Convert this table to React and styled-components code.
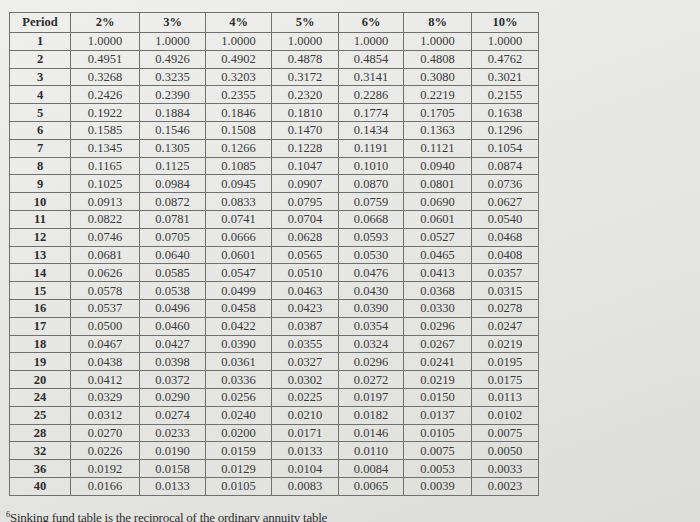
import React from "react";
import styled, { createGlobalStyle } from "styled-components";

const Global = createGlobalStyle`
  html, body { margin: 0; padding: 0; }
  body {
    width: 700px;
    height: 522px;
    overflow: hidden;
    background: linear-gradient(160deg, #efefed 0%, #e8e8e6 40%, #e2e2df 75%, #dcdcd8 100%);
    font-family: "Liberation Serif", "Times New Roman", serif;
    color: #363636;
  }
`;

const Page = styled.div`
  padding: 12px 0 0 9px;
`;

const Table = styled.table`
  border-collapse: collapse;
  table-layout: fixed;
  width: 521px;
  border: 1.5px solid #6a6a6a;
`;

const HeadCell = styled.th`
  height: 19px;
  padding: 0;
  font-weight: bold;
  font-size: 12.5px;
  text-align: center;
  color: #2e2e2e;
  border: 1.5px solid #707070;
  width: ${(p) => p.$w}px;
`;

const Cell = styled.td`
  height: 16.8px;
  padding: 0;
  font-size: 12.5px;
  text-align: center;
  font-weight: ${(p) => (p.$bold ? "bold" : "normal")};
  color: ${(p) => (p.$bold ? "#2e2e2e" : "#3a3a3a")};
  border: 1.5px solid #707070;
  line-height: 16px;
`;

const Note = styled.p`
  margin: 13px 0 0 -3px;
  font-size: 13px;
  letter-spacing: -0.25px;
  color: #303030;
`;

const Sup = styled.sup`
  font-size: 8.5px;
  vertical-align: 5px;
`;

const widths = [60, 68, 65, 65, 66, 64, 67, 66];
const heads = ["Period", "2%", "3%", "4%", "5%", "6%", "8%", "10%"];

const rows = [
  ["1", "1.0000", "1.0000", "1.0000", "1.0000", "1.0000", "1.0000", "1.0000"],
  ["2", "0.4951", "0.4926", "0.4902", "0.4878", "0.4854", "0.4808", "0.4762"],
  ["3", "0.3268", "0.3235", "0.3203", "0.3172", "0.3141", "0.3080", "0.3021"],
  ["4", "0.2426", "0.2390", "0.2355", "0.2320", "0.2286", "0.2219", "0.2155"],
  ["5", "0.1922", "0.1884", "0.1846", "0.1810", "0.1774", "0.1705", "0.1638"],
  ["6", "0.1585", "0.1546", "0.1508", "0.1470", "0.1434", "0.1363", "0.1296"],
  ["7", "0.1345", "0.1305", "0.1266", "0.1228", "0.1191", "0.1121", "0.1054"],
  ["8", "0.1165", "0.1125", "0.1085", "0.1047", "0.1010", "0.0940", "0.0874"],
  ["9", "0.1025", "0.0984", "0.0945", "0.0907", "0.0870", "0.0801", "0.0736"],
  ["10", "0.0913", "0.0872", "0.0833", "0.0795", "0.0759", "0.0690", "0.0627"],
  ["11", "0.0822", "0.0781", "0.0741", "0.0704", "0.0668", "0.0601", "0.0540"],
  ["12", "0.0746", "0.0705", "0.0666", "0.0628", "0.0593", "0.0527", "0.0468"],
  ["13", "0.0681", "0.0640", "0.0601", "0.0565", "0.0530", "0.0465", "0.0408"],
  ["14", "0.0626", "0.0585", "0.0547", "0.0510", "0.0476", "0.0413", "0.0357"],
  ["15", "0.0578", "0.0538", "0.0499", "0.0463", "0.0430", "0.0368", "0.0315"],
  ["16", "0.0537", "0.0496", "0.0458", "0.0423", "0.0390", "0.0330", "0.0278"],
  ["17", "0.0500", "0.0460", "0.0422", "0.0387", "0.0354", "0.0296", "0.0247"],
  ["18", "0.0467", "0.0427", "0.0390", "0.0355", "0.0324", "0.0267", "0.0219"],
  ["19", "0.0438", "0.0398", "0.0361", "0.0327", "0.0296", "0.0241", "0.0195"],
  ["20", "0.0412", "0.0372", "0.0336", "0.0302", "0.0272", "0.0219", "0.0175"],
  ["24", "0.0329", "0.0290", "0.0256", "0.0225", "0.0197", "0.0150", "0.0113"],
  ["25", "0.0312", "0.0274", "0.0240", "0.0210", "0.0182", "0.0137", "0.0102"],
  ["28", "0.0270", "0.0233", "0.0200", "0.0171", "0.0146", "0.0105", "0.0075"],
  ["32", "0.0226", "0.0190", "0.0159", "0.0133", "0.0110", "0.0075", "0.0050"],
  ["36", "0.0192", "0.0158", "0.0129", "0.0104", "0.0084", "0.0053", "0.0033"],
  ["40", "0.0166", "0.0133", "0.0105", "0.0083", "0.0065", "0.0039", "0.0023"],
];

export default function App() {
  return (
    <>
      <Global />
      <Page>
        <Table>
          <thead>
            <tr>
              {heads.map((h, i) => (
                <HeadCell key={h} $w={widths[i]}>
                  {h}
                </HeadCell>
              ))}
            </tr>
          </thead>
          <tbody>
            {rows.map((r) => (
              <tr key={r[0]}>
                {r.map((v, i) => (
                  <Cell key={i} $bold={i === 0}>
                    {v}
                  </Cell>
                ))}
              </tr>
            ))}
          </tbody>
        </Table>
        <Note>
          <Sup>6</Sup>Sinking fund table is the reciprocal of the ordinary annuity table
        </Note>
      </Page>
    </>
  );
}
